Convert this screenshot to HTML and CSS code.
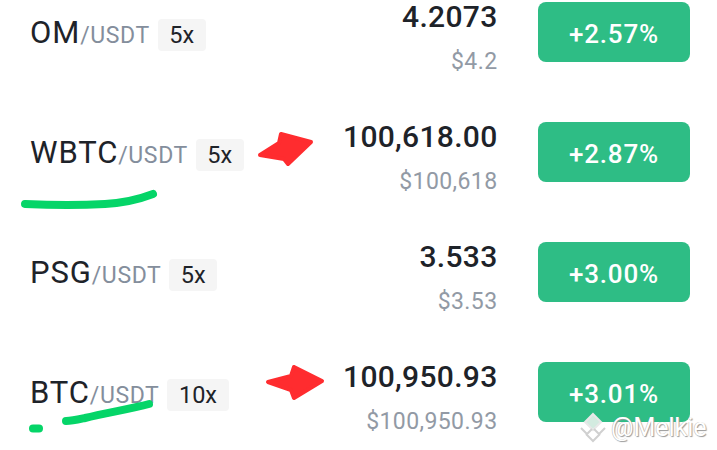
FILE: index.html
```html
<!DOCTYPE html>
<html lang="en">
<head>
<meta charset="utf-8">
<title>Markets</title>
<link rel="stylesheet" href="styles.css">
</head>
<body>
<main class="list">
  <section class="row">
    <div class="pair"><span class="base">OM</span><span class="quote">/USDT</span><span class="lev">5x</span></div>
    <div class="price"><div class="last">4.2073</div><div class="fiat">$4.2</div></div>
    <div class="change">+2.57%</div>
  </section>
  <section class="row">
    <div class="pair"><span class="base">WBTC</span><span class="quote">/USDT</span><span class="lev">5x</span></div>
    <div class="price"><div class="last">100,618.00</div><div class="fiat">$100,618</div></div>
    <div class="change">+2.87%</div>
  </section>
  <section class="row">
    <div class="pair"><span class="base">PSG</span><span class="quote">/USDT</span><span class="lev">5x</span></div>
    <div class="price"><div class="last">3.533</div><div class="fiat">$3.53</div></div>
    <div class="change">+3.00%</div>
  </section>
  <section class="row">
    <div class="pair"><span class="base">BTC</span><span class="quote">/USDT</span><span class="lev">10x</span></div>
    <div class="price"><div class="last">100,950.93</div><div class="fiat">$100,950.93</div></div>
    <div class="change">+3.01%</div>
  </section>
</main>
<svg class="marks" width="717" height="450" viewBox="0 0 717 450" aria-hidden="true">
  <path class="green" d="M25 204 C50 205 85 205 105 204 C122 203 140 199 153 194"/>
  <path class="green" d="M66 421 C72 421 76 420 85 418 C105 413 130 409 149 404"/>
  <path class="green dot" d="M33 428.500 L39 428.500"/>
  <path class="red" d="M260 155 L279 143 L281 134 L311 142 L288 164 L284 159 Z"/>
  <path class="red" d="M268 382 L291 376 L294 367 L322 381 L294 398 L291 390 Z"/>
  <g class="wm-icon">
    <path class="wm-top" d="M593 414 L601 422 L593 430 L585 422 Z"/>
    <path d="M581 428 L587 434 L592 429"/>
    <path d="M605 428 L599 434 L594 429"/>
    <path d="M586 434 L593 441 L600 434"/>
  </g>
</svg>
<div class="watermark">@Melkie</div>
</body>
</html>
```

FILE: styles.css
```css
html, body {
  margin: 0;
  padding: 0;
  background: #fff;
}
body {
  position: relative;
  width: 717px;
  height: 450px;
  overflow: hidden;
  font-family: Roboto, "Liberation Sans", sans-serif;
}
.list {
  display: flex;
  flex-direction: column;
  margin-top: -28px;
  padding: 0 27px 0 30px;
}
.row {
  display: grid;
  grid-template-columns: 1fr auto 152px;
  column-gap: 40.500px;
  align-items: center;
  height: 120px;
}
.pair {
  display: flex;
  align-items: baseline;
  padding-top: 4px;
}
.base {
  font-size: 31px;
  line-height: 36px;
  color: #1e2329;
  letter-spacing: 0.9px;
}
.quote {
  font-size: 23px;
  line-height: 36px;
  color: #848e9c;
  letter-spacing: 0.6px;
}
.lev {
  margin-left: 8px;
  padding: 0 11.500px;
  line-height: 32px;
  font-size: 23.500px;
  color: #1e2329;
  background: #f5f5f5;
  border-radius: 4px;
}
.price {
  padding-top: 11px;
  text-align: right;
}
.last {
  font-size: 30px;
  line-height: 36px;
  font-weight: 500;
  color: #1e2329;
  letter-spacing: 0.3px;
}
.fiat {
  margin-top: 13px;
  font-size: 23px;
  line-height: 28px;
  color: #929aa5;
  letter-spacing: 0.4px;
}
.change {
  height: 60px;
  line-height: 64px;
  text-align: center;
  background: #2ebd85;
  color: #fff;
  border-radius: 8px;
  font-size: 26px;
  font-weight: 500;
  letter-spacing: 0.8px;
}
.marks {
  position: absolute;
  left: 0;
  top: 0;
}
.green {
  fill: none;
  stroke: #05d568;
  stroke-width: 8px;
  stroke-linecap: round;
  stroke-linejoin: round;
}
.red {
  fill: #ff2c2f;
  stroke: #ff2c2f;
  stroke-width: 4px;
  stroke-linejoin: round;
}
.wm-icon path {
  fill: none;
  stroke: #d0d0d0;
  stroke-width: 2px;
}
.wm-icon .wm-top {
  fill: #d3ebe0;
  stroke: #e8e8e8;
}
.watermark {
  position: absolute;
  left: 611px;
  top: 411px;
  font-size: 25px;
  line-height: 34px;
  color: #fff;
  text-shadow: 1px 1px 1px #9a9a9a, -0.5px -0.5px 0.5px #b5b5b5;
}
```
